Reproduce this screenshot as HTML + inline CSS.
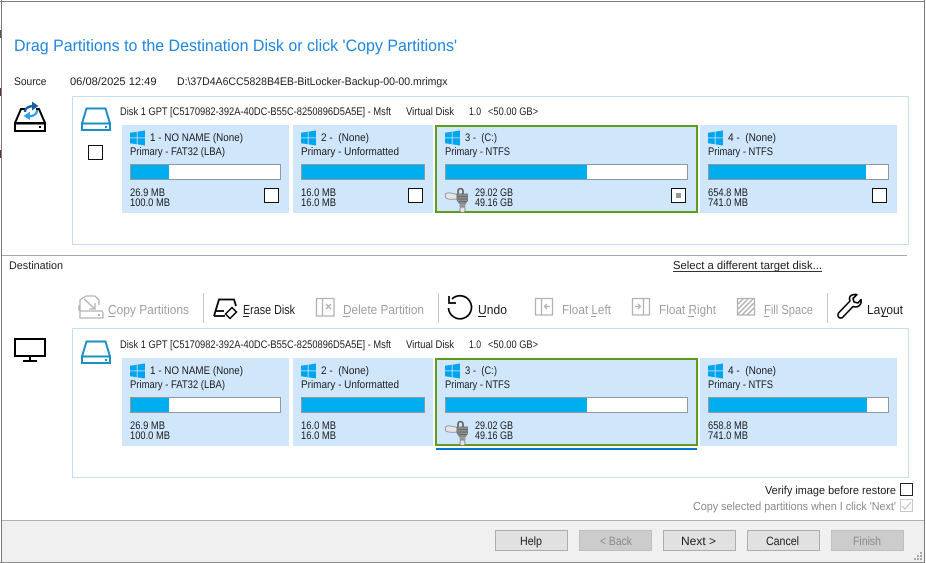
<!DOCTYPE html>
<html><head><meta charset="utf-8"><style>
html,body{margin:0;padding:0;background:#fff}
svg{display:block}
text{font-family:"Liberation Sans",sans-serif;font-size:11px;fill:#1c1c1c;white-space:pre;text-rendering:geometricPrecision}
.t{font-size:13px}.g{fill:#a0a0a0}.b{font-size:12px}
</style></head><body>
<svg xmlns="http://www.w3.org/2000/svg" width="926" height="563" viewBox="0 0 926 563">
<defs>
<symbol id="win" width="15" height="15" viewBox="0 0 15 15"><path fill="#00a4ef" d="M0 2.200 6.800 1.200V7H0ZM7.600 1.100 15 0V7H7.600ZM0 7.800H6.800V13.700L0 12.800ZM7.600 7.800H15V15L7.600 13.900Z"/></symbol>
<symbol id="disk" width="30" height="24" viewBox="0 0 30 24"><path fill="none" stroke="#1b8fc4" stroke-width="2" d="M1 16 5.500 1H24.500L29 16V22.500H1Z"/><rect x="0" y="15" width="30" height="2" fill="#1b8fc4"/><rect x="24" y="18.500" width="2" height="2" fill="#1b8fc4"/></symbol>
<symbol id="lock" width="24" height="27" viewBox="0 0 24 27">
<path fill="#e4e6e6" stroke="#8a8a8a" stroke-width=".8" d="M1.500 7C3 5 8 6 13 7.500V12C8 12.500 3 12.500 1.500 10.500Z"/>
<path fill="none" stroke="#6a6a6a" stroke-width="1.800" d="M14 7V4C14 .8 19 .8 19 4V7"/>
<path fill="#8e9292" stroke="#666" stroke-width=".7" d="M13 7H24V13L21.500 16.500H15.500L13 13Z"/>
<path stroke="#5a5a5a" stroke-width=".8" d="M13.500 9.500H23.500M13.500 12H23.500M15 14.500H22"/>
<rect x="15.500" y="16.500" width="6" height="3.500" fill="#9a9d9d"/>
<rect x="16" y="20" width="5" height="5.500" rx="2" fill="#e4e4e4" stroke="#777" stroke-width=".8"/>
</symbol>
</defs>

<rect width="926" height="563" fill="#fff"/>
<rect x="0" y="1" width="925" height="1" fill="#7f7f7f"/>
<rect x="1" y="0" width="1" height="563" fill="#7a7a7a"/>
<rect x="924" y="0" width="1" height="563" fill="#7a7a7a"/>
<rect x="0" y="30" width="1" height="8" fill="#555"/><rect x="0" y="88" width="1" height="8" fill="#603050"/><rect x="0" y="150" width="1" height="8" fill="#603050"/>

<text x="14" y="51" style="font-size:16.500px;fill:#1f86e0" textLength="443" lengthAdjust="spacingAndGlyphs">Drag Partitions to the Destination Disk or click 'Copy Partitions'</text>
<text x="14" y="85" textLength="32.500" lengthAdjust="spacingAndGlyphs">Source</text>
<text x="70" y="85" textLength="86.500" lengthAdjust="spacingAndGlyphs">06/08/2025 12:49</text>
<text x="177" y="85" textLength="270.500" lengthAdjust="spacingAndGlyphs">D:\37D4A6CC5828B4EB-BitLocker-Backup-00-00.mrimgx</text>

<!-- source icon -->
<path fill="none" stroke="#000" stroke-width="2" d="M25 109H21L15 123V131H45V123L39 109H36"/>
<rect x="14" y="122" width="32" height="2.500" fill="#000"/>
<rect x="39" y="126" width="2" height="2" fill="#000"/>
<path fill="none" stroke="#1a5e9c" stroke-width="2.400" d="M25 112C25 108 29 106 34 106"/><path fill="#1a5e9c" d="M32 101.500 38.500 106 32 110.500Z"/>
<path fill="none" stroke="#2fa3e6" stroke-width="2.400" d="M37 110C37 114 33 117 28 116"/><path fill="#2fa3e6" d="M30 111.500 23.500 116 30 120Z"/>

<!-- source panel -->
<rect x="72.500" y="96.500" width="836" height="148" fill="#fff" stroke="#c3def5"/>
<use href="#disk" x="81" y="107.500"/>
<rect x="88.500" y="145.500" width="14" height="14" fill="#fff" stroke="#111"/>
<text x="120" y="115" textLength="271" lengthAdjust="spacingAndGlyphs">Disk 1 GPT [C5170982-392A-40DC-B55C-8250896D5A5E] - Msft</text>
<text x="406" y="115" textLength="48" lengthAdjust="spacingAndGlyphs">Virtual Disk</text>
<text x="469" y="115" textLength="12" lengthAdjust="spacingAndGlyphs">1.0</text>
<text x="488" y="115" textLength="50" lengthAdjust="spacingAndGlyphs">&lt;50.00 GB&gt;</text>

<rect x="122" y="125" width="167" height="88" fill="#d0e6fb"/>
<use href="#win" x="130" y="130.500"/>
<text x="150" y="141" textLength="93" lengthAdjust="spacingAndGlyphs">1 - NO NAME (None)</text>
<text x="130" y="155" textLength="95" lengthAdjust="spacingAndGlyphs">Primary - FAT32 (LBA)</text>
<rect x="130.500" y="164.500" width="150" height="15" fill="#fff" stroke="#8f9a9e"/><rect x="131" y="165" width="38" height="14" fill="#00adef"/>
<text x="130" y="196" textLength="35" lengthAdjust="spacingAndGlyphs">26.9 MB</text>
<text x="130" y="206" textLength="40" lengthAdjust="spacingAndGlyphs">100.0 MB</text>
<rect x="264.500" y="188.500" width="14" height="14" fill="#fff" stroke="#111"/>

<rect x="293" y="125" width="140" height="88" fill="#d0e6fb"/>
<use href="#win" x="301" y="130.500"/>
<text x="321" y="141" textLength="48" lengthAdjust="spacingAndGlyphs">2 -  (None)</text>
<text x="301" y="155" textLength="98" lengthAdjust="spacingAndGlyphs">Primary - Unformatted</text>
<rect x="301.500" y="164.500" width="123" height="15" fill="#00adef" stroke="#8f9a9e"/>
<text x="301" y="196" textLength="35" lengthAdjust="spacingAndGlyphs">16.0 MB</text>
<text x="301" y="206" textLength="35" lengthAdjust="spacingAndGlyphs">16.0 MB</text>
<rect x="408.500" y="188.500" width="14" height="14" fill="#fff" stroke="#111"/>

<rect x="436" y="126" width="261" height="86" fill="#d0e6fb" stroke="#5c9e1c" stroke-width="2"/>
<use href="#win" x="445" y="130.500"/>
<text x="465" y="141" textLength="32" lengthAdjust="spacingAndGlyphs">3 -  (C:)</text>
<text x="445" y="155" textLength="65" lengthAdjust="spacingAndGlyphs">Primary - NTFS</text>
<rect x="445.500" y="164.500" width="242" height="15" fill="#fff" stroke="#8f9a9e"/><rect x="446" y="165" width="141" height="14" fill="#00adef"/>
<use href="#lock" x="444" y="187"/>
<text x="475" y="196" textLength="38" lengthAdjust="spacingAndGlyphs">29.02 GB</text>
<text x="475" y="206" textLength="38" lengthAdjust="spacingAndGlyphs">49.16 GB</text>
<rect x="671.500" y="188.500" width="14" height="14" fill="#fff" stroke="#111"/><rect x="676" y="193" width="5" height="5" fill="#8f9a9a"/>

<rect x="700" y="125" width="197" height="88" fill="#d0e6fb"/>
<use href="#win" x="708" y="130.500"/>
<text x="728" y="141" textLength="48" lengthAdjust="spacingAndGlyphs">4 -  (None)</text>
<text x="708" y="155" textLength="65" lengthAdjust="spacingAndGlyphs">Primary - NTFS</text>
<rect x="708.500" y="164.500" width="180" height="15" fill="#fff" stroke="#8f9a9e"/><rect x="709" y="165" width="157" height="14" fill="#00adef"/>
<text x="708" y="196" textLength="40" lengthAdjust="spacingAndGlyphs">654.8 MB</text>
<text x="708" y="206" textLength="40" lengthAdjust="spacingAndGlyphs">741.0 MB</text>
<rect x="872.500" y="188.500" width="14" height="14" fill="#fff" stroke="#111"/>

<!-- divider -->
<rect x="2" y="255" width="905" height="1" fill="#a8a8a8"/>
<text x="9" y="269" textLength="54" lengthAdjust="spacingAndGlyphs">Destination</text>
<text x="673" y="269" style="font-size:11.500px" textLength="149" lengthAdjust="spacingAndGlyphs">Select a different target disk...</text>
<rect x="673" y="271" width="149" height="1" fill="#333"/>

<!-- toolbar -->
<g fill="none" stroke="#b2b2b2" stroke-width="1.300">
<path d="M80 311V300L86 296H95L99 300V305"/><path d="M84 299 95 309M95 303V309H89"/><path d="M80 311H102L103 313V318H80ZM79 305V311"/>
<rect x="98" y="314" width="2" height="2" fill="#b2b2b2" stroke="none"/>
<path d="M316.500 298.500H334V316H316.500ZM322.500 298.500V316"/><path d="M326 304 331 309M331 304 326 309"/>
<path d="M535.500 298.500H552.500V315H535.500ZM541.500 298.500V315"/><path d="M550 306.500H545M547 304 544.500 306.500 547 309"/>
<path d="M632.500 298.500H649.500V315H632.500ZM643.500 298.500V315"/><path d="M635 306.500H640M638 304 640.500 306.500 638 309"/>
<rect x="737.500" y="298.500" width="17" height="16.500"/><path stroke-width="1.500" d="M738 304 743 299M738 309 748 299M738 314 753 299M742 315 754 303M747 315 754 308"/>
</g>
<g fill="none" stroke="#000" stroke-width="1.800">
<path d="M214 316 219 299.500H234L236 306M214 316H225M215.500 311H224"/>
<path fill="#fff" d="M225.500 314 232 307.500 236.500 312 230 318.500Z" stroke-width="1.500"/>
<path fill="#000" stroke="none" d="M225.500 314 229 310.500 233 315 230 318.500Z" opacity="0"/>
<path d="M452 299A11.500 11.500 0 1 1 448.500 308" stroke-width="1.700"/>
<path d="M449 296V303H456" stroke-width="1.700"/>
<path d="M839 312.500 850 301C848 296 852 294 857 294.500L853 298.500 854 302 858 303 861 299.500C862 305 858 308 853 306.500L843 317C840 320 836 316 839 312.500Z" stroke-width="1.600" stroke-linejoin="round"/>
</g>
<rect x="203" y="293" width="1" height="30" fill="#c4c4c4"/>
<rect x="438" y="293" width="1" height="30" fill="#c4c4c4"/>
<rect x="827" y="293" width="1" height="30" fill="#c4c4c4"/>
<text class="t g" x="108" y="314" textLength="81" lengthAdjust="spacingAndGlyphs">Copy Partitions</text><rect x="108" y="316" width="7" height="1" fill="#a0a0a0"/>
<text class="t" x="243" y="314" textLength="52" lengthAdjust="spacingAndGlyphs">Erase Disk</text><rect x="243" y="316" width="6" height="1" fill="#222"/>
<text class="t g" x="343" y="314" textLength="81" lengthAdjust="spacingAndGlyphs">Delete Partition</text><rect x="343" y="316" width="7" height="1" fill="#a0a0a0"/>
<text class="t" x="478" y="314" textLength="29" lengthAdjust="spacingAndGlyphs">Undo</text><rect x="478" y="316" width="8" height="1" fill="#222"/>
<text class="t g" x="562" y="314" textLength="49" lengthAdjust="spacingAndGlyphs">Float Left</text><rect x="591" y="316" width="5" height="1" fill="#a0a0a0"/>
<text class="t g" x="659" y="314" textLength="57" lengthAdjust="spacingAndGlyphs">Float Right</text><rect x="688" y="316" width="6" height="1" fill="#a0a0a0"/>
<text class="t g" x="764" y="314" textLength="49" lengthAdjust="spacingAndGlyphs">Fill Space</text><rect x="764" y="316" width="5" height="1" fill="#a0a0a0"/>
<text class="t" x="867" y="314" textLength="36" lengthAdjust="spacingAndGlyphs">Layout</text><rect x="882" y="316" width="6" height="1" fill="#222"/>

<!-- monitor -->
<rect x="15" y="339" width="30" height="17" fill="#fff" stroke="#000" stroke-width="2"/>
<rect x="29" y="357" width="2" height="4" fill="#000"/><rect x="23" y="360" width="14" height="2" fill="#000"/>

<!-- destination panel -->
<rect x="72.500" y="328.500" width="836" height="149" fill="#fff" stroke="#c3def5"/>
<use href="#disk" x="81" y="340.500"/>
<text x="120" y="348" textLength="271" lengthAdjust="spacingAndGlyphs">Disk 1 GPT [C5170982-392A-40DC-B55C-8250896D5A5E] - Msft</text>
<text x="406" y="348" textLength="48" lengthAdjust="spacingAndGlyphs">Virtual Disk</text>
<text x="469" y="348" textLength="12" lengthAdjust="spacingAndGlyphs">1.0</text>
<text x="488" y="348" textLength="50" lengthAdjust="spacingAndGlyphs">&lt;50.00 GB&gt;</text>

<rect x="122" y="358" width="167" height="88" fill="#d0e6fb"/>
<use href="#win" x="130" y="363.500"/>
<text x="150" y="374" textLength="93" lengthAdjust="spacingAndGlyphs">1 - NO NAME (None)</text>
<text x="130" y="388" textLength="95" lengthAdjust="spacingAndGlyphs">Primary - FAT32 (LBA)</text>
<rect x="130.500" y="397.500" width="150" height="15" fill="#fff" stroke="#8f9a9e"/><rect x="131" y="398" width="38" height="14" fill="#00adef"/>
<text x="130" y="429" textLength="35" lengthAdjust="spacingAndGlyphs">26.9 MB</text>
<text x="130" y="439" textLength="40" lengthAdjust="spacingAndGlyphs">100.0 MB</text>

<rect x="293" y="358" width="140" height="88" fill="#d0e6fb"/>
<use href="#win" x="301" y="363.500"/>
<text x="321" y="374" textLength="48" lengthAdjust="spacingAndGlyphs">2 -  (None)</text>
<text x="301" y="388" textLength="98" lengthAdjust="spacingAndGlyphs">Primary - Unformatted</text>
<rect x="301.500" y="397.500" width="123" height="15" fill="#00adef" stroke="#8f9a9e"/>
<text x="301" y="429" textLength="35" lengthAdjust="spacingAndGlyphs">16.0 MB</text>
<text x="301" y="439" textLength="35" lengthAdjust="spacingAndGlyphs">16.0 MB</text>

<rect x="436" y="359" width="261" height="86" fill="#d0e6fb" stroke="#5c9e1c" stroke-width="2"/>
<use href="#win" x="445" y="363.500"/>
<text x="465" y="374" textLength="32" lengthAdjust="spacingAndGlyphs">3 -  (C:)</text>
<text x="445" y="388" textLength="65" lengthAdjust="spacingAndGlyphs">Primary - NTFS</text>
<rect x="445.500" y="397.500" width="242" height="15" fill="#fff" stroke="#8f9a9e"/><rect x="446" y="398" width="141" height="14" fill="#00adef"/>
<use href="#lock" x="444" y="420"/>
<text x="475" y="429" textLength="38" lengthAdjust="spacingAndGlyphs">29.02 GB</text>
<text x="475" y="439" textLength="38" lengthAdjust="spacingAndGlyphs">49.16 GB</text>
<rect x="436" y="448" width="261" height="2" fill="#0078d7"/>

<rect x="700" y="358" width="197" height="88" fill="#d0e6fb"/>
<use href="#win" x="708" y="363.500"/>
<text x="728" y="374" textLength="48" lengthAdjust="spacingAndGlyphs">4 -  (None)</text>
<text x="708" y="388" textLength="65" lengthAdjust="spacingAndGlyphs">Primary - NTFS</text>
<rect x="708.500" y="397.500" width="180" height="15" fill="#fff" stroke="#8f9a9e"/><rect x="709" y="398" width="158" height="14" fill="#00adef"/>
<text x="708" y="429" textLength="40" lengthAdjust="spacingAndGlyphs">658.8 MB</text>
<text x="708" y="439" textLength="40" lengthAdjust="spacingAndGlyphs">741.0 MB</text>

<!-- options -->
<text x="765" y="494" style="font-size:11.500px" textLength="131" lengthAdjust="spacingAndGlyphs">Verify image before restore</text>
<rect x="900.500" y="483.500" width="12" height="12" fill="#fff" stroke="#222"/>
<text x="693" y="510" style="font-size:11.500px;fill:#8a8a8a" textLength="203" lengthAdjust="spacingAndGlyphs">Copy selected partitions when I click 'Next'</text>
<rect x="900.500" y="499.500" width="12" height="12" fill="#fff" stroke="#c8c8c8"/>
<path d="M902 506 905 509 911 502" fill="none" stroke="#c0c0c0" stroke-width="1.200"/>

<!-- footer -->
<rect x="2" y="521" width="922" height="41" fill="#f0f0f0"/>
<rect x="2" y="520" width="922" height="1" fill="#b0b0b0"/>
<rect x="0" y="562" width="925" height="1" fill="#8a8a8a"/>
<rect x="495.500" y="530.500" width="72" height="20" fill="#e1e1e1" stroke="#adadad"/>
<rect x="579.500" y="530.500" width="72" height="20" fill="#cccccc" stroke="#bfbfbf"/>
<rect x="663.500" y="530.500" width="72" height="20" fill="#e1e1e1" stroke="#adadad"/>
<rect x="747.500" y="530.500" width="72" height="20" fill="#e1e1e1" stroke="#adadad"/>
<rect x="831.500" y="530.500" width="72" height="20" fill="#cccccc" stroke="#bfbfbf"/>
<text class="b" x="520" y="545" textLength="22" lengthAdjust="spacingAndGlyphs">Help</text>
<text class="b" style="fill:#8a8a8a" x="600" y="545" textLength="32" lengthAdjust="spacingAndGlyphs">&lt; Back</text>
<text class="b" x="681" y="545" textLength="35" lengthAdjust="spacingAndGlyphs">Next &gt;</text>
<text class="b" x="766" y="545" textLength="33" lengthAdjust="spacingAndGlyphs">Cancel</text>
<text class="b" style="fill:#8a8a8a" x="853" y="545" textLength="28" lengthAdjust="spacingAndGlyphs">Finish</text>
<g fill="#a8a8a8"><rect x="920" y="552" width="2" height="2"/><rect x="917" y="555" width="2" height="2"/><rect x="920" y="555" width="2" height="2"/><rect x="914" y="558" width="2" height="2"/><rect x="917" y="558" width="2" height="2"/><rect x="920" y="558" width="2" height="2"/></g>
</svg>
</body></html>
